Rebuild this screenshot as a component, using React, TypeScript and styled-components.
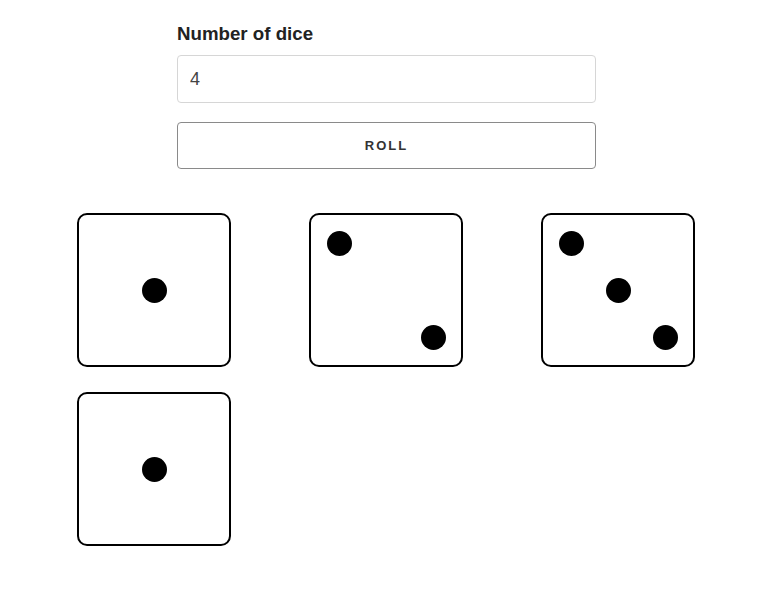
import styled, { createGlobalStyle } from "styled-components";

const GlobalStyle = createGlobalStyle`
  body {
    margin: 0;
    background: #ffffff;
    font-family: "Liberation Sans", Arial, sans-serif;
    color: #222;
  }
`;

const Page = styled.div`
  display: flex;
  flex-direction: column;
  align-items: center;
  padding-top: 20px;
`;

const Form = styled.div`
  width: 419px;
  display: flex;
  flex-direction: column;
  margin-left: 2px;
`;

const Label = styled.label`
  font-size: 18.7px;
  line-height: 27px;
  font-weight: 700;
  color: #222;
  margin-bottom: 8px;
`;

const CountInput = styled.input`
  box-sizing: border-box;
  height: 48px;
  width: 100%;
  padding: 0 12px;
  font-family: "Liberation Sans", Arial, sans-serif;
  font-size: 18px;
  color: #444;
  border: 1px solid #d6d6d6;
  border-radius: 4px;
  outline: none;
`;

const RollButton = styled.button`
  box-sizing: border-box;
  margin-top: 19px;
  height: 47px;
  width: 100%;
  background: #fff;
  border: 1px solid #8a8a8a;
  border-radius: 4px;
  font-family: "Liberation Sans", Arial, sans-serif;
  font-size: 13px;
  font-weight: 700;
  letter-spacing: 2px;
  color: #333;
  cursor: pointer;
`;

const DiceGrid = styled.div`
  margin-top: 44px;
  width: 618px;
  display: grid;
  grid-template-columns: repeat(3, 154px);
  justify-content: space-between;
  row-gap: 25px;
`;

const Die = styled.div`
  box-sizing: border-box;
  width: 154px;
  height: 154px;
  border: 2px solid #000;
  border-radius: 10px;
  padding: 4.5px 4px 4.5px 5px;
  display: grid;
  grid-template-columns: repeat(3, 47px);
  grid-template-rows: repeat(3, 47px);
  place-items: center;
`;

const Pip = styled.span<{ $col: number; $row: number }>`
  grid-column: ${(p) => p.$col};
  grid-row: ${(p) => p.$row};
  width: 25px;
  height: 25px;
  border-radius: 50%;
  background: #000;
`;

const layouts: Record<number, [number, number][]> = {
  1: [[2, 2]],
  2: [[1, 1], [3, 3]],
  3: [[1, 1], [2, 2], [3, 3]],
  4: [[1, 1], [3, 1], [1, 3], [3, 3]],
  5: [[1, 1], [3, 1], [2, 2], [1, 3], [3, 3]],
  6: [[1, 1], [3, 1], [1, 2], [3, 2], [1, 3], [3, 3]],
};

function DieFace({ value }: { value: number }) {
  return (
    <Die>
      {layouts[value].map(([c, r], i) => (
        <Pip key={i} $col={c} $row={r} />
      ))}
    </Die>
  );
}

export default function App() {
  const rolls = [1, 2, 3, 1];
  return (
    <>
      <GlobalStyle />
      <Page>
        <Form>
          <Label htmlFor="count">Number of dice</Label>
          <CountInput id="count" type="text" defaultValue="4" />
          <RollButton>ROLL</RollButton>
        </Form>
        <DiceGrid>
          {rolls.map((v, i) => (
            <DieFace key={i} value={v} />
          ))}
        </DiceGrid>
      </Page>
    </>
  );
}
